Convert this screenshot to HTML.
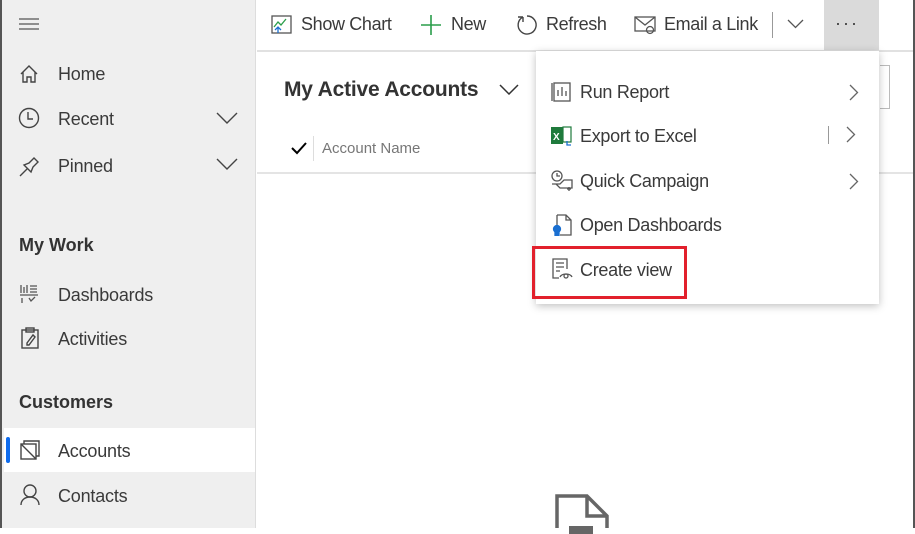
<!DOCTYPE html>
<html><head><meta charset="utf-8"><style>
*{margin:0;padding:0;box-sizing:border-box}
body{width:915px;height:528px;overflow:hidden;background:#fff;font-family:"Segoe UI","Liberation Sans",sans-serif;color:#323130;position:relative}
.a{position:absolute;white-space:nowrap}
#side{position:absolute;left:0;top:0;width:256px;height:528px;background:#efefef;border-left:2px solid #555;border-right:1px solid #ddd}
.nav{font-size:18px;color:#3a3a3a;letter-spacing:-0.2px}
.hd{font-size:18px;font-weight:bold;color:#333}
.tb{font-size:18px;color:#3a3a3a;letter-spacing:-0.35px}
.mi{font-size:18px;color:#3a3a3a;letter-spacing:-0.3px}
svg{position:absolute}
</style></head><body>
<div id="side"></div>
<div class="a" style="left:4px;top:428px;width:251px;height:44px;background:#fff"></div>
<div class="a" style="left:6px;top:437px;width:4px;height:26px;background:#0f6cee;border-radius:2px"></div>
<svg style="left:18px;top:17px" width="22" height="14"><path d="M1 2h20M1 7h20M1 12h20" stroke="#555" stroke-width="1.3"/></svg>
<svg style="left:19px;top:64px" width="20" height="20" fill="none" stroke="#444" stroke-width="1.4"><path d="M2 10L10 2l8 8M4 8v10h4v-5h4v5h4V8"/></svg>
<div class="a nav" style="left:58px;top:64px">Home</div>
<svg style="left:18px;top:107px" width="22" height="22" fill="none" stroke="#444" stroke-width="1.4"><circle cx="11" cy="11" r="9.5"/><path d="M10 5v7h5"/></svg>
<div class="a nav" style="left:58px;top:109px">Recent</div>
<svg style="left:216px;top:112px" width="22" height="12" fill="none" stroke="#444" stroke-width="1.4"><path d="M1 1l10 10 10-10"/></svg>
<svg style="left:19px;top:155px" width="22" height="22" fill="none" stroke="#444" stroke-width="1.4"><path d="M1 21l7-7M5 10l7 7 2-5 5-5-4-4-5 5z"/></svg>
<div class="a nav" style="left:58px;top:156px">Pinned</div>
<svg style="left:216px;top:158px" width="22" height="12" fill="none" stroke="#444" stroke-width="1.4"><path d="M1 1l10 10 10-10"/></svg>
<div class="a hd" style="left:19px;top:235px">My Work</div>
<svg style="left:19px;top:284px" width="20" height="20" fill="none" stroke="#555" stroke-width="1.3"><path d="M2 1v8M5 3v6M8 1v8M11 2h7M11 5h7M11 8h7M1 11h18M3 14v5M10 14l2 3 4-4"/></svg>
<div class="a nav" style="left:58px;top:285px">Dashboards</div>
<svg style="left:21px;top:327px" width="18" height="22" fill="none" stroke="#444" stroke-width="1.4"><rect x="1" y="3" width="16" height="18"/><rect x="5" y="1" width="8" height="4"/><path d="M6 16l6-8 2 2-6 8H6z"/></svg>
<div class="a nav" style="left:58px;top:329px">Activities</div>
<div class="a hd" style="left:19px;top:392px">Customers</div>
<svg style="left:20px;top:440px" width="20" height="20" fill="none" stroke="#444" stroke-width="1.4"><rect x="1" y="4" width="15" height="15"/><path d="M4 4V1h15v15h-3M1 4l15 15"/></svg>
<div class="a nav" style="left:58px;top:441px">Accounts</div>
<svg style="left:20px;top:484px" width="20" height="22" fill="none" stroke="#444" stroke-width="1.4"><circle cx="10" cy="7" r="6"/><path d="M1 21c0-5 4-8 9-8s9 3 9 8"/></svg>
<div class="a nav" style="left:58px;top:486px">Contacts</div>

<div class="a" style="left:257px;top:50px;width:658px;height:2px;background:#e1e1e1"></div>
<div class="a" style="left:824px;top:0;width:55px;height:50px;background:#dadada"></div>
<div class="a tb" style="left:835px;top:13px;letter-spacing:2px">···</div>
<svg style="left:271px;top:15px" width="21" height="20" fill="none" stroke="#555" stroke-width="1.3"><rect x="1" y="1" width="19" height="17"/><path d="M3 12l4-5 3 3 5-6" stroke="#2a9d4a"/><path d="M7 18v-6M4 15l3-3 3 3" stroke="#1a6fd1"/></svg>
<div class="a tb" style="left:301px;top:14px">Show Chart</div>
<svg style="left:420px;top:14px" width="22" height="22" stroke="#2a9d4a" stroke-width="1.6"><path d="M11 1v20M1 11h20"/></svg>
<div class="a tb" style="left:451px;top:14px">New</div>
<svg style="left:516px;top:14px" width="22" height="22" fill="none" stroke="#444" stroke-width="1.4"><path d="M7 3A9 9 0 1 0 11 2M7 3V8M7 3H2"/></svg>
<div class="a tb" style="left:546px;top:14px">Refresh</div>
<svg style="left:634px;top:15px" width="22" height="20" fill="none" stroke="#555" stroke-width="1.3"><rect x="1" y="2" width="20" height="14"/><path d="M1 2l10 8 10-8"/><circle cx="16" cy="15" r="3.5"/></svg>
<div class="a tb" style="left:664px;top:14px">Email a Link</div>
<div class="a" style="left:772px;top:12px;width:1px;height:26px;background:#999"></div>
<svg style="left:787px;top:19px" width="17" height="10" fill="none" stroke="#555" stroke-width="1.3"><path d="M1 1l7.5 7.5L16 1"/></svg>

<div class="a" style="left:284px;top:78px;font-size:21px;font-weight:bold;color:#333;letter-spacing:-0.2px">My Active Accounts</div>
<svg style="left:499px;top:84px" width="20" height="11" fill="none" stroke="#333" stroke-width="1.5"><path d="M1 1l9 9 9-9"/></svg>
<svg style="left:291px;top:142px" width="16" height="13" fill="none" stroke="#000" stroke-width="2"><path d="M1 6l5 5 9-10"/></svg>
<div class="a" style="left:313px;top:136px;width:1px;height:25px;background:#ddd"></div>
<div class="a" style="left:322px;top:140px;font-size:15px;color:#777">Account Name</div>
<div class="a" style="left:257px;top:172px;width:658px;height:2px;background:#e4e4e4"></div>
<div class="a" style="left:880px;top:65px;width:10px;height:44px;border:1px solid #bbb;border-left:none"></div>
<div class="a" style="left:913px;top:0;width:2px;height:528px;background:#555"></div>
<svg style="left:555px;top:494px" width="58" height="40" fill="none" stroke="#666" stroke-width="3.5"><path d="M2 34V2h30l20 20v12M32 2v20h20"/><path d="M14 36h24" stroke-width="8"/></svg>

<div class="a" style="left:536px;top:51px;width:343px;height:253px;background:#fff;box-shadow:0 2px 8px rgba(0,0,0,.25)"></div>
<svg style="left:551px;top:82px" width="20" height="20" fill="none" stroke="#555" stroke-width="1.3"><rect x="3" y="1" width="16" height="18"/><path d="M1 1v18M7 14V8M11 14V5M15 14V9"/></svg>
<div class="a mi" style="left:580px;top:82px">Run Report</div>
<svg style="left:849px;top:84px" width="10" height="17" fill="none" stroke="#666" stroke-width="1.3"><path d="M1 1l7.5 7.5L1 16"/></svg>
<svg style="left:551px;top:125px" width="22" height="22"><rect x="0" y="2" width="12" height="17" fill="#1f7a3c"/><text x="2" y="15" font-size="10" font-weight="bold" fill="#fff" font-family="Liberation Sans">X</text><rect x="12" y="2" width="8" height="15" fill="none" stroke="#1f7a3c" stroke-width="1.2"/><path d="M16 16v4h4" stroke="#1a6fd1" fill="none" stroke-width="1.3"/></svg>
<div class="a mi" style="left:580px;top:126px">Export to Excel</div>
<div class="a" style="left:828px;top:126px;width:1px;height:18px;background:#999"></div>
<svg style="left:846px;top:126px" width="10" height="17" fill="none" stroke="#666" stroke-width="1.3"><path d="M1 1l7.5 7.5L1 16"/></svg>
<svg style="left:551px;top:170px" width="22" height="22" fill="none" stroke="#555" stroke-width="1.3"><circle cx="6" cy="6" r="5"/><path d="M6 3v3h3M1 14h8l4-4h8v8H9l-4-4M18 17v4M16 19h4"/></svg>
<div class="a mi" style="left:580px;top:171px">Quick Campaign</div>
<svg style="left:849px;top:173px" width="10" height="17" fill="none" stroke="#666" stroke-width="1.3"><path d="M1 1l7.5 7.5L1 16"/></svg>
<svg style="left:552px;top:214px" width="20" height="22" fill="none" stroke="#555" stroke-width="1.3"><path d="M5 1h9l5 5v15H8M5 1v10M14 1v5h5"/><circle cx="5" cy="15" r="3.5" fill="#1a6fd1" stroke="#1a6fd1"/><path d="M3 18v4l2-1 2 1v-4" fill="#1a6fd1" stroke="#1a6fd1"/></svg>
<div class="a mi" style="left:580px;top:215px">Open Dashboards</div>
<svg style="left:551px;top:258px" width="22" height="22" fill="none" stroke="#555" stroke-width="1.3"><path d="M8 20H2V1h14v10M5 5h8M5 9h8M5 13h4"/><path d="M9 19c2-4 10-4 12 0"/><circle cx="15" cy="18" r="2"/></svg>
<div class="a mi" style="left:580px;top:260px">Create view</div>
<div class="a" style="left:532px;top:246px;width:155px;height:53px;border:3px solid #e2202c"></div>
</body></html>
